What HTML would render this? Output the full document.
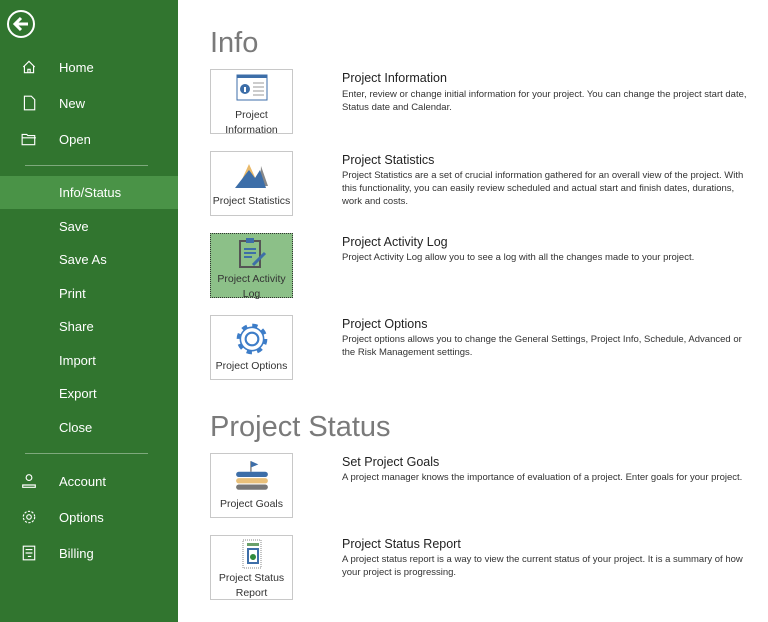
<!DOCTYPE html>
<html><head><style>
body{margin:0;width:768px;height:622px;background:#fff;font-family:"Liberation Sans",sans-serif;position:relative;overflow:hidden}
#side{position:absolute;left:0;top:0;width:178px;height:622px;background:#31752f;color:#fff}
.it{position:absolute;left:59px;font-size:13px}
.ic{position:absolute;left:21px}
.sel{position:absolute;left:0;top:176px;width:178px;height:33px;background:#4a9347}
.hr{position:absolute;left:25px;width:123px;height:1px;background:#7ea97c}
h1{position:absolute;left:210px;margin:0;font-weight:normal;color:#7a7a7a;font-size:29px}
.tile{position:absolute;left:210px;width:81px;height:63px;border:1px solid #c8c8c8;background:#fff;font-size:10.5px;line-height:15px;color:#333;text-align:center;box-sizing:content-box}
.tile svg{display:block;margin:4px auto 2px}
.tt{position:absolute;left:342px;font-size:12.5px;color:#222}
.dd{position:absolute;left:342px;font-size:9.5px;color:#333;line-height:13px;width:410px}
</style></head><body>
<div id="side">
<svg style="position:absolute;left:6px;top:9px" width="30" height="30" viewBox="0 0 30 30"><circle cx="15" cy="15" r="13" fill="none" stroke="#fff" stroke-width="2"/><path d="M22 15H9M15 9l-6 6 6 6" fill="none" stroke="#fff" stroke-width="3"/></svg>
<svg class="ic" style="top:59px" width="16" height="16" viewBox="0 0 14 14" fill="none" stroke="#fff"><path d="M2 7L7 2l5 5M3 6v6h8V6M6 12V9h2v3"/></svg>
<div class="it" style="top:60px">Home</div>
<svg class="ic" style="top:95px" width="16" height="16" viewBox="0 0 14 14" fill="none" stroke="#fff"><path d="M3 1h6l3 3v9H3z"/></svg>
<div class="it" style="top:96px">New</div>
<svg class="ic" style="top:131px" width="16" height="16" viewBox="0 0 14 14" fill="none" stroke="#fff"><path d="M1 3h4l1 1h6v8H1zM1 6h12"/></svg>
<div class="it" style="top:132px">Open</div>
<div class="hr" style="top:165px"></div>
<div class="sel"></div>
<div class="it" style="top:185px">Info/Status</div>
<div class="it" style="top:219px">Save</div>
<div class="it" style="top:252px">Save As</div>
<div class="it" style="top:286px">Print</div>
<div class="it" style="top:319px">Share</div>
<div class="it" style="top:353px">Import</div>
<div class="it" style="top:386px">Export</div>
<div class="it" style="top:420px">Close</div>
<div class="hr" style="top:453px"></div>
<svg class="ic" style="top:473px" width="16" height="16" viewBox="0 0 14 14" fill="none" stroke="#fff"><circle cx="7" cy="4" r="2.5"/><path d="M1.5 12.5v-2h11v2z"/></svg>
<div class="it" style="top:474px">Account</div>
<svg class="ic" style="top:509px" width="16" height="16" viewBox="0 0 14 14" fill="none" stroke="#fff"><circle cx="7" cy="7" r="2"/><circle cx="7" cy="7" r="5" stroke-dasharray="2 1.2"/></svg>
<div class="it" style="top:510px">Options</div>
<svg class="ic" style="top:545px" width="16" height="16" viewBox="0 0 14 14" fill="none" stroke="#fff"><path d="M2 1h10v12H2zM4 4h6M4 7h6M6 10h3"/></svg>
<div class="it" style="top:546px">Billing</div>
</div>

<h1 style="top:27px">Info</h1>
<div class="tile" style="top:69px"><svg width="32" height="28" viewBox="0 0 32 28" style="margin:4px auto 6px"><rect x="1" y="1" width="30" height="25" fill="#fff" stroke="#3d6ea8"/><rect x="1" y="1" width="30" height="3" fill="#3d6ea8"/><circle cx="9" cy="15" r="5" fill="#3d6ea8"/><path d="M9 13v5" stroke="#fff" stroke-width="2"/><path d="M17 9h11M17 13h11M17 17h11M17 21h11" stroke="#999"/></svg>Project<br>Information</div>
<div class="tile" style="top:151px"><svg width="34" height="32" viewBox="0 0 34 32" style="margin:6px auto 4px"><path d="M14 6l10 22H4z" fill="#e9b96a"/><path d="M26 8l7 20h-8z" fill="#888"/><path d="M0 30L14 12l6 8 5-8 6 18z" fill="#3d6ea8"/></svg>Project Statistics</div>
<div class="tile" style="top:233px;background:#8cc088;border:1px dotted #333"><svg width="30" height="34" viewBox="0 0 30 32" style="margin:2px auto 2px"><rect x="3" y="4" width="20" height="26" fill="none" stroke="#555" stroke-width="2"/><rect x="9" y="1" width="8" height="5" fill="#3d6ea8"/><path d="M7 12h12M7 16h12M7 20h8" stroke="#3d6ea8" stroke-width="2"/><path d="M16 28l12-12" stroke="#3d6ea8" stroke-width="3"/></svg>Project Activity<br>Log</div>
<div class="tile" style="top:315px"><svg width="36" height="36" viewBox="0 0 34 34" style="margin:5px auto 2px"><circle cx="17" cy="17" r="6" fill="none" stroke="#3d7dc8" stroke-width="2"/><circle cx="17" cy="17" r="12" fill="none" stroke="#3d7dc8" stroke-width="5" stroke-dasharray="4.7 4.7"/><circle cx="17" cy="17" r="10" fill="none" stroke="#fff" stroke-width="2"/><circle cx="17" cy="17" r="11" fill="none" stroke="#3d7dc8" stroke-width="1.5"/></svg>Project Options</div>

<div class="tt" style="top:71px">Project Information</div>
<div class="dd" style="top:88px">Enter, review or change initial information for your project. You can change the project start date, Status date and Calendar.</div>
<div class="tt" style="top:153px">Project Statistics</div>
<div class="dd" style="top:169px">Project Statistics are a set of crucial information gathered for an overall view of the project. With this functionality, you can easily review scheduled and actual start and finish dates, durations, work and costs.</div>
<div class="tt" style="top:235px">Project Activity Log</div>
<div class="dd" style="top:251px">Project Activity Log allow you to see a log with all the changes made to your project.</div>
<div class="tt" style="top:317px">Project Options</div>
<div class="dd" style="top:333px">Project options allows you to change the General Settings, Project Info, Schedule, Advanced or the Risk Management settings.</div>

<h1 style="top:411px">Project Status</h1>
<div class="tile" style="top:453px"><svg width="36" height="36" viewBox="0 0 34 32" style="margin:4px auto 3px"><path d="M16 2v10" stroke="#555"/><path d="M16 2l7 3-7 3z" fill="#3d6ea8"/><rect x="2" y="12" width="30" height="5" rx="2.5" fill="#3d6ea8"/><rect x="2" y="18" width="30" height="5" rx="2.5" fill="#e9c07a"/><rect x="2" y="24" width="30" height="5" rx="2.5" fill="#777"/></svg>Project Goals</div>
<div class="tile" style="top:535px"><svg width="26" height="32" viewBox="0 0 26 32" style="margin:2px auto 1px"><rect x="4" y="2" width="18" height="28" fill="#fff" stroke="#888" stroke-dasharray="1 1"/><rect x="8" y="5" width="12" height="3" fill="#6aa06a"/><rect x="9" y="11" width="10" height="14" fill="#fff" stroke="#3d6ea8" stroke-width="2"/><circle cx="14" cy="19" r="3" fill="#2f8a3c"/></svg>Project Status<br>Report</div>
<div class="tt" style="top:455px">Set Project Goals</div>
<div class="dd" style="top:471px">A project manager knows the importance of evaluation of a project. Enter goals for your project.</div>
<div class="tt" style="top:537px">Project Status Report</div>
<div class="dd" style="top:553px">A project status report is a way to view the current status of your project. It is a summary of how your project is progressing.</div>
</body></html>
